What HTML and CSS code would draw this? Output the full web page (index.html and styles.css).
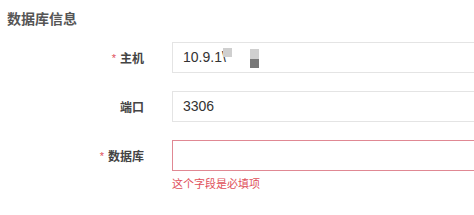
FILE: index.html
```html
<!DOCTYPE html>
<html>
    <head>
        <title>数据库信息</title>
        <link rel="stylesheet" href="styles.css">
    </head>
    <body>
        <h4 class="SectionTitle">数据库信息</h4>

        <div class="Form">
            <label class="Label"><span class="Star">*</span>主机</label>
            <div class="Field">
                <div class="Input">10.9.1\<span class="Mask MaskA"></span><span class="Mask MaskB"></span><span class="Mask MaskC"></span></div>
            </div>

            <label class="Label">端口</label>
            <div class="Field">
                <div class="Input">3306</div>
            </div>

            <label class="Label"><span class="Star">*</span>数据库</label>
            <div class="Field">
                <div class="Input Invalid"></div>
                <div class="Error">这个字段是必填项</div>
            </div>
        </div>
    </body>
</html>
```

FILE: styles.css
```css
body {
    margin: 0;
    padding: 9px 0 0 7px;
    overflow: hidden;
    background-color: #fff;
    font-family: "Liberation Sans", "Noto Sans CJK SC", sans-serif;
    color: #333;
}
.SectionTitle {
    margin: 0;
    font-size: 14px;
    line-height: 20px;
    font-weight: bold;
    color: #555;
}
.Form {
    display: grid;
    grid-template-columns: 137px 1fr;
    column-gap: 28px;
    row-gap: 18px;
    margin-top: 13px;
}
.Label {
    height: 31px;
    display: flex;
    align-items: center;
    justify-content: flex-end;
    font-size: 12px;
    font-weight: bold;
    color: #444;
}
.Star {
    color: #e0505a;
    font-size: 11px;
    margin-right: 4px;
    font-weight: normal;
}
/* the inputs run on past the right edge, so no right border */
.Input {
    position: relative;
    box-sizing: border-box;
    height: 31px;
    border: 1px solid #e4e4e4;
    border-right: none;
    padding: 0 10px;
    font-size: 14px;
    line-height: 29px;
    color: #333;
}
.Invalid {
    border-color: #e08893;
}
.Error {
    margin-top: 6px;
    font-size: 11px;
    line-height: 14px;
    color: #e0505a;
}
/* redaction blocks over the host value */
.Mask {
    position: absolute;
    width: 9px;
    height: 9px;
    background-color: #cfcfcf;
}
.MaskA {
    left: 50px;
    top: 5px;
}
.MaskB {
    left: 77px;
    top: 6px;
    height: 10px;
}
.MaskC {
    left: 77px;
    top: 16px;
    background-color: #777;
}
```
